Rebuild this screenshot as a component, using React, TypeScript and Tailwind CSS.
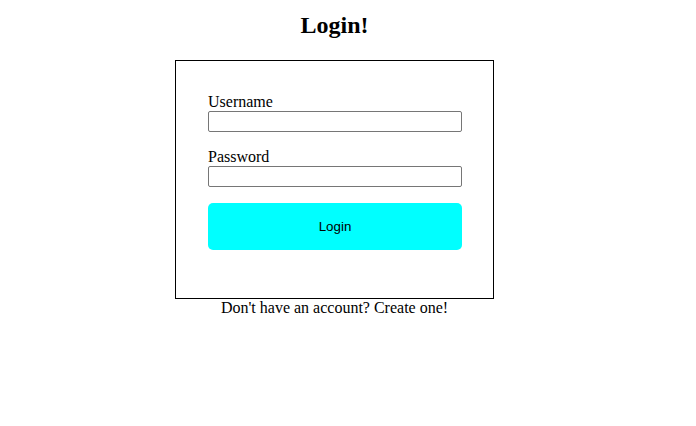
export default function App() {
  return (
    <div className="w-[669px] text-center text-black font-['Liberation_Serif',serif]">
      <h1 className="mt-[12px] mb-[20px] text-[24px] leading-[27.6px] font-bold">Login!</h1>

      <form
        onSubmit={(e) => e.preventDefault()}
        className="mx-auto w-[319px] border border-black pl-[32px] pr-[31px] pt-[30px] pb-[48px] text-left"
      >
        <label htmlFor="username" className="block pt-[2px] text-[16px] leading-[18.4px]">
          Username
        </label>
        <input
          id="username"
          type="text"
          className="block h-[21px] w-[254px] rounded-[2px] border border-[#767676] bg-white px-[2px] text-[13.33px]"
        />

        <label htmlFor="password" className="mt-[13px] block pt-[3px] text-[16px] leading-[18.4px]">
          Password
        </label>
        <input
          id="password"
          type="password"
          className="block h-[21px] w-[254px] rounded-[2px] border border-[#767676] bg-white px-[2px] text-[13.33px]"
        />

        <button
          type="submit"
          className="mt-[16px] block h-[47px] w-[254px] rounded-[5px] bg-[#00ffff] text-[13.33px] font-['Liberation_Sans',Arial,sans-serif] text-black"
        >
          Login
        </button>
      </form>

      <p className="text-[16px] leading-[18.4px]">Don't have an account? Create one!</p>
    </div>
  );
}
